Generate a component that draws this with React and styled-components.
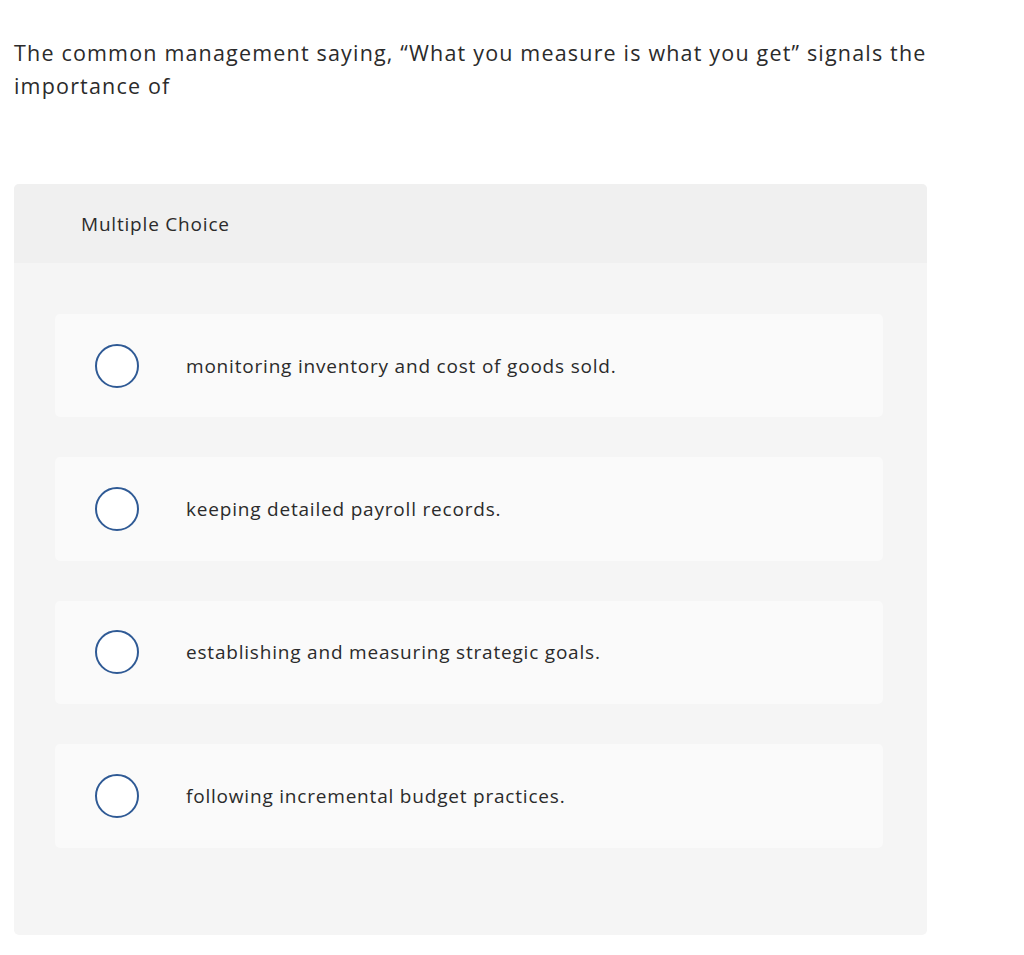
import React from 'react';
import styled, { createGlobalStyle } from 'styled-components';

const GlobalStyle = createGlobalStyle`
  body {
    margin: 0;
    background: #fff;
    font-family: "Open Sans", "Noto Sans", sans-serif;
    color: #2b2b2b;
  }
`;

const Page = styled.div`
  padding: 36px 14px 20px 14px;
  width: 913px;
`;

const Question = styled.p`
  margin: 0 0 82px 0;
  font-size: 21.5px;
  letter-spacing: 1.18px;
  line-height: 33px;
  width: 930px;
`;

const Card = styled.div`
  border-radius: 5px;
  overflow: hidden;
  background: #f5f5f5;
`;

const CardHeader = styled.div`
  background: #f0f0f0;
  height: 79px;
  display: flex;
  align-items: center;
  padding-left: 67px;
  font-size: 19px;
  letter-spacing: 0.8px;
`;

const OptionList = styled.div`
  display: flex;
  flex-direction: column;
  gap: 40px;
  padding: 51px 44px 87px 41px;
`;

const Option = styled.label`
  display: flex;
  align-items: center;
  height: 103.4px;
  padding-left: 40px;
  background: #fafafa;
  border-radius: 5px;
  font-size: 19px;
  letter-spacing: 0.8px;
  cursor: pointer;
`;

const Radio = styled.span`
  box-sizing: border-box;
  width: 44px;
  height: 44px;
  border: 2px solid #2f5a95;
  border-radius: 50%;
  background: #fff;
  flex-shrink: 0;
  margin-right: 47px;
`;

const options = [
  'monitoring inventory and cost of goods sold.',
  'keeping detailed payroll records.',
  'establishing and measuring strategic goals.',
  'following incremental budget practices.',
];

export default function App() {
  return (
    <>
      <GlobalStyle />
      <Page>
        <Question>
          The common management saying, “What you measure is what you get” signals the importance of
        </Question>
        <Card>
          <CardHeader>Multiple Choice</CardHeader>
          <OptionList>
            {options.map((o) => (
              <Option key={o}>
                <Radio />
                {o}
              </Option>
            ))}
          </OptionList>
        </Card>
      </Page>
    </>
  );
}
